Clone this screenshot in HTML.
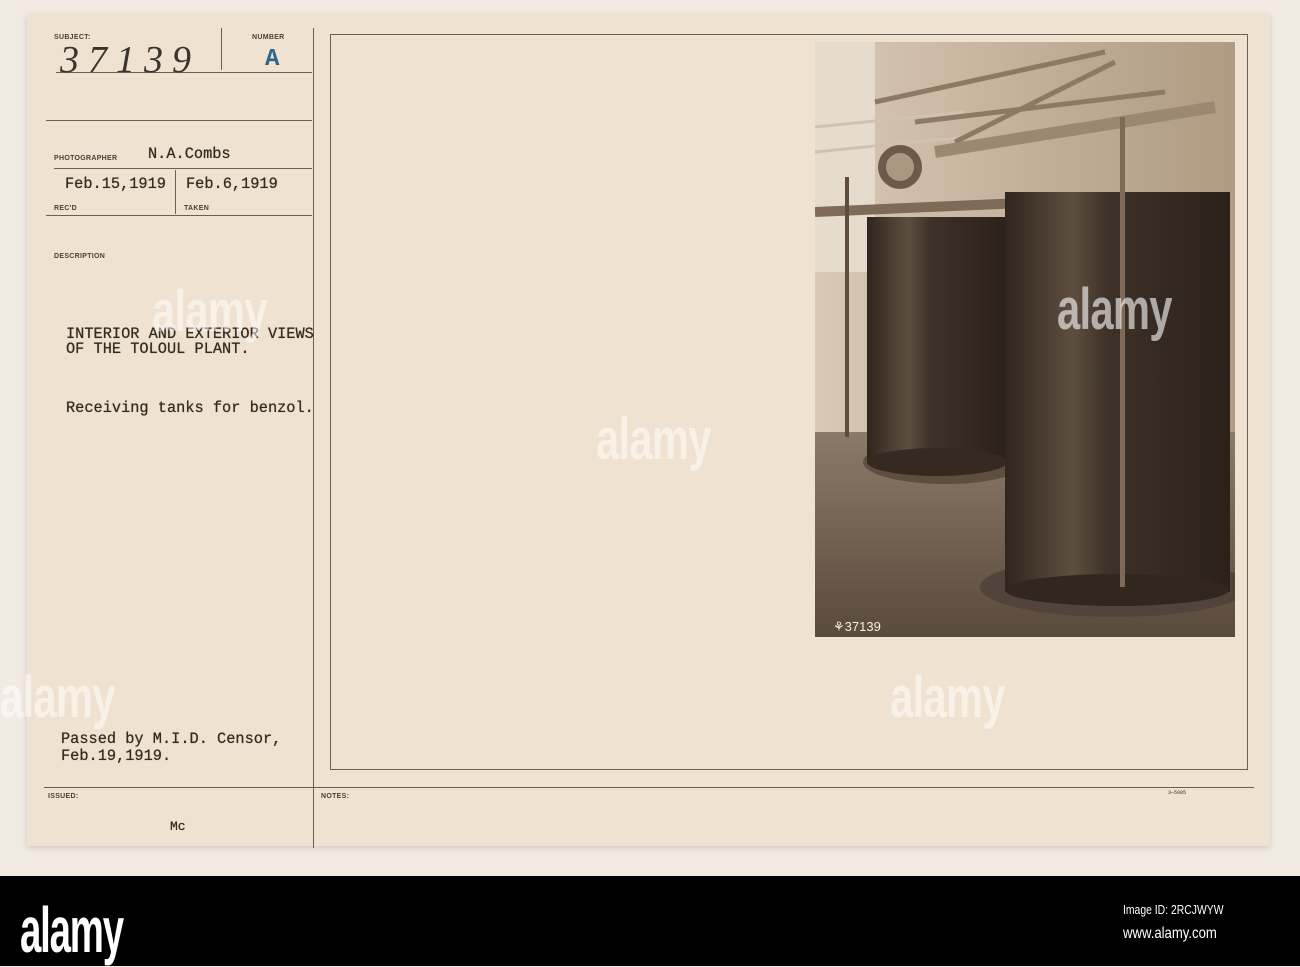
<!DOCTYPE html>
<html><head><meta charset="utf-8"><style>
*{margin:0;padding:0;box-sizing:border-box}
body{width:1300px;height:966px;background:#f2ebe3;position:relative;overflow:hidden;font-family:"Liberation Mono",monospace;color:#3a3226}
.card{position:absolute;left:27px;top:14px;width:1243px;height:832px;background:#efe2d0;box-shadow:0 2px 6px rgba(0,0,0,.15)}
.l{position:absolute;background:#6b5f50}
.t{position:absolute;white-space:nowrap}
.lab{position:absolute;font-family:"Liberation Sans",sans-serif;font-weight:bold;font-size:7px;color:#4a4035;letter-spacing:.3px}
.ty{font-size:15.3px;color:#332b20;text-shadow:0 0 .6px #332b20}
.wm{position:absolute;font-family:"Liberation Sans",sans-serif;font-weight:bold;color:rgba(255,255,255,.5);transform:scaleX(.72);transform-origin:left top;letter-spacing:-1px}
.bar{position:absolute;left:0;top:876px;width:1300px;height:90px;background:#000}
</style></head><body>
<div class="card"></div>
<div class="l" style="left:313px;top:28px;width:1px;height:820px"></div>
<div class="l" style="left:221px;top:28px;width:1px;height:42px"></div>
<div class="l" style="left:56px;top:72px;width:256px;height:1px"></div>
<div class="l" style="left:46px;top:120px;width:266px;height:1px"></div>
<div class="l" style="left:54px;top:168px;width:258px;height:1px"></div>
<div class="l" style="left:175px;top:170px;width:1px;height:44px"></div>
<div class="l" style="left:46px;top:215px;width:266px;height:1px"></div>
<div class="l" style="left:44px;top:787px;width:1210px;height:1px"></div>
<div style="position:absolute;left:330px;top:34px;width:918px;height:736px;border:1px solid #6b5f50"></div>

<div class="lab" style="left:54px;top:34px">SUBJECT:</div>
<div class="t" style="left:60px;top:38px;font-family:'Liberation Serif',serif;font-style:italic;font-size:38px;color:#3a3430;letter-spacing:9px;font-weight:300">37139</div>
<div class="lab" style="left:252px;top:34px">NUMBER</div>
<div class="t" style="left:265px;top:46px;font-family:'Liberation Mono',monospace;font-weight:bold;font-size:24px;color:#2c6690">A</div>
<div class="lab" style="left:54px;top:155px">PHOTOGRAPHER</div>
<div class="t ty" style="left:148px;top:145px">N.A.Combs</div>
<div class="t ty" style="left:65px;top:175px">Feb.15,1919</div>
<div class="t ty" style="left:186px;top:175px">Feb.6,1919</div>
<div class="lab" style="left:54px;top:205px">REC'D</div>
<div class="lab" style="left:184px;top:205px">TAKEN</div>
<div class="lab" style="left:54px;top:253px">DESCRIPTION</div>
<div class="t ty" style="left:66px;top:327px;line-height:15px">INTERIOR AND EXTERIOR VIEWS<br>OF THE TOLOUL PLANT.</div>
<div class="t ty" style="left:66px;top:399px">Receiving tanks for benzol.</div>
<div class="t ty" style="left:61px;top:731px;line-height:17px">Passed by M.I.D. Censor,<br>Feb.19,1919.</div>
<div class="lab" style="left:48px;top:793px">ISSUED:</div>
<div class="lab" style="left:321px;top:793px">NOTES:</div>
<div class="t ty" style="left:170px;top:819px;font-size:13px">Mc</div>
<div class="t" style="left:1168px;top:790px;font-size:5px">3—5005</div>

<svg style="position:absolute;left:815px;top:42px" width="420" height="595" viewBox="0 0 420 595">
<defs>
<linearGradient id="bg" x1="0" y1="0" x2="1" y2="0"><stop offset="0" stop-color="#d8c8b4"/><stop offset="1" stop-color="#b09a82"/></linearGradient>
<linearGradient id="fl" x1="0" y1="0" x2="0" y2="1"><stop offset="0" stop-color="#8c7a68"/><stop offset="1" stop-color="#5a4a3c"/></linearGradient>
<linearGradient id="tk" x1="0" y1="0" x2="1" y2="0"><stop offset="0" stop-color="#30261e"/><stop offset=".3" stop-color="#5e4e40"/><stop offset=".45" stop-color="#3e3228"/><stop offset="1" stop-color="#2a211a"/></linearGradient>
</defs>
<rect width="420" height="595" fill="url(#bg)"/>
<rect x="0" y="390" width="420" height="205" fill="url(#fl)"/>
<rect x="0" y="0" width="60" height="230" fill="#e6dccd"/>
<path d="M0 85 L150 70 M0 110 L150 95" stroke="#d0c2b0" stroke-width="3"/>
<path d="M60 60 L290 10 M100 80 L350 50 M140 100 L300 20" stroke="#8e7a64" stroke-width="5" fill="none"/>
<path d="M120 110 L400 65" stroke="#9c8870" stroke-width="12" fill="none"/>
<circle cx="85" cy="125" r="22" fill="#6e5a48"/>
<circle cx="85" cy="125" r="14" fill="#ac9882"/>
<path d="M0 170 L230 160" stroke="#7e6a56" stroke-width="10"/>
<ellipse cx="130" cy="420" rx="82" ry="22" fill="#5e4e40"/>
<rect x="52" y="175" width="140" height="245" fill="url(#tk)"/>
<ellipse cx="122" cy="420" rx="70" ry="14" fill="#362a20"/>
<ellipse cx="300" cy="545" rx="135" ry="30" fill="#52443a"/>
<rect x="190" y="150" width="225" height="400" fill="url(#tk)"/>
<ellipse cx="302" cy="548" rx="112" ry="16" fill="#32271e"/>
<rect x="305" y="75" width="5" height="470" fill="#7e6a56"/>
<rect x="30" y="135" width="4" height="260" fill="#5e4c3c"/>
<text x="18" y="589" font-family="Liberation Sans" font-size="13" fill="#f5efe6">⚘37139</text>
</svg>

<div class="wm" style="left:152px;top:278px;font-size:58px">alamy</div>
<div class="wm" style="left:596px;top:406px;font-size:58px">alamy</div>
<div class="wm" style="left:1057px;top:276px;font-size:58px;color:rgba(255,255,255,.6)">alamy</div>
<div class="wm" style="left:0;top:664px;font-size:58px">alamy</div>
<div class="wm" style="left:890px;top:664px;font-size:58px">alamy</div>

<div class="bar"></div>
<div class="t" style="left:20px;top:893px;font-family:'Liberation Sans',sans-serif;font-weight:bold;font-size:64px;color:#fff;transform:scaleX(.6);transform-origin:left top;letter-spacing:-2px">alamy</div>
<div class="t" style="left:1123px;top:902px;font-family:'Liberation Sans',sans-serif;font-size:13px;color:#fff;transform:scaleX(.8);transform-origin:left top">Image ID: 2RCJWYW</div>
<div class="t" style="left:1123px;top:925px;font-family:'Liberation Sans',sans-serif;font-size:16px;color:#fff;transform:scaleX(.82);transform-origin:left top">www.alamy.com</div>
</body></html>
